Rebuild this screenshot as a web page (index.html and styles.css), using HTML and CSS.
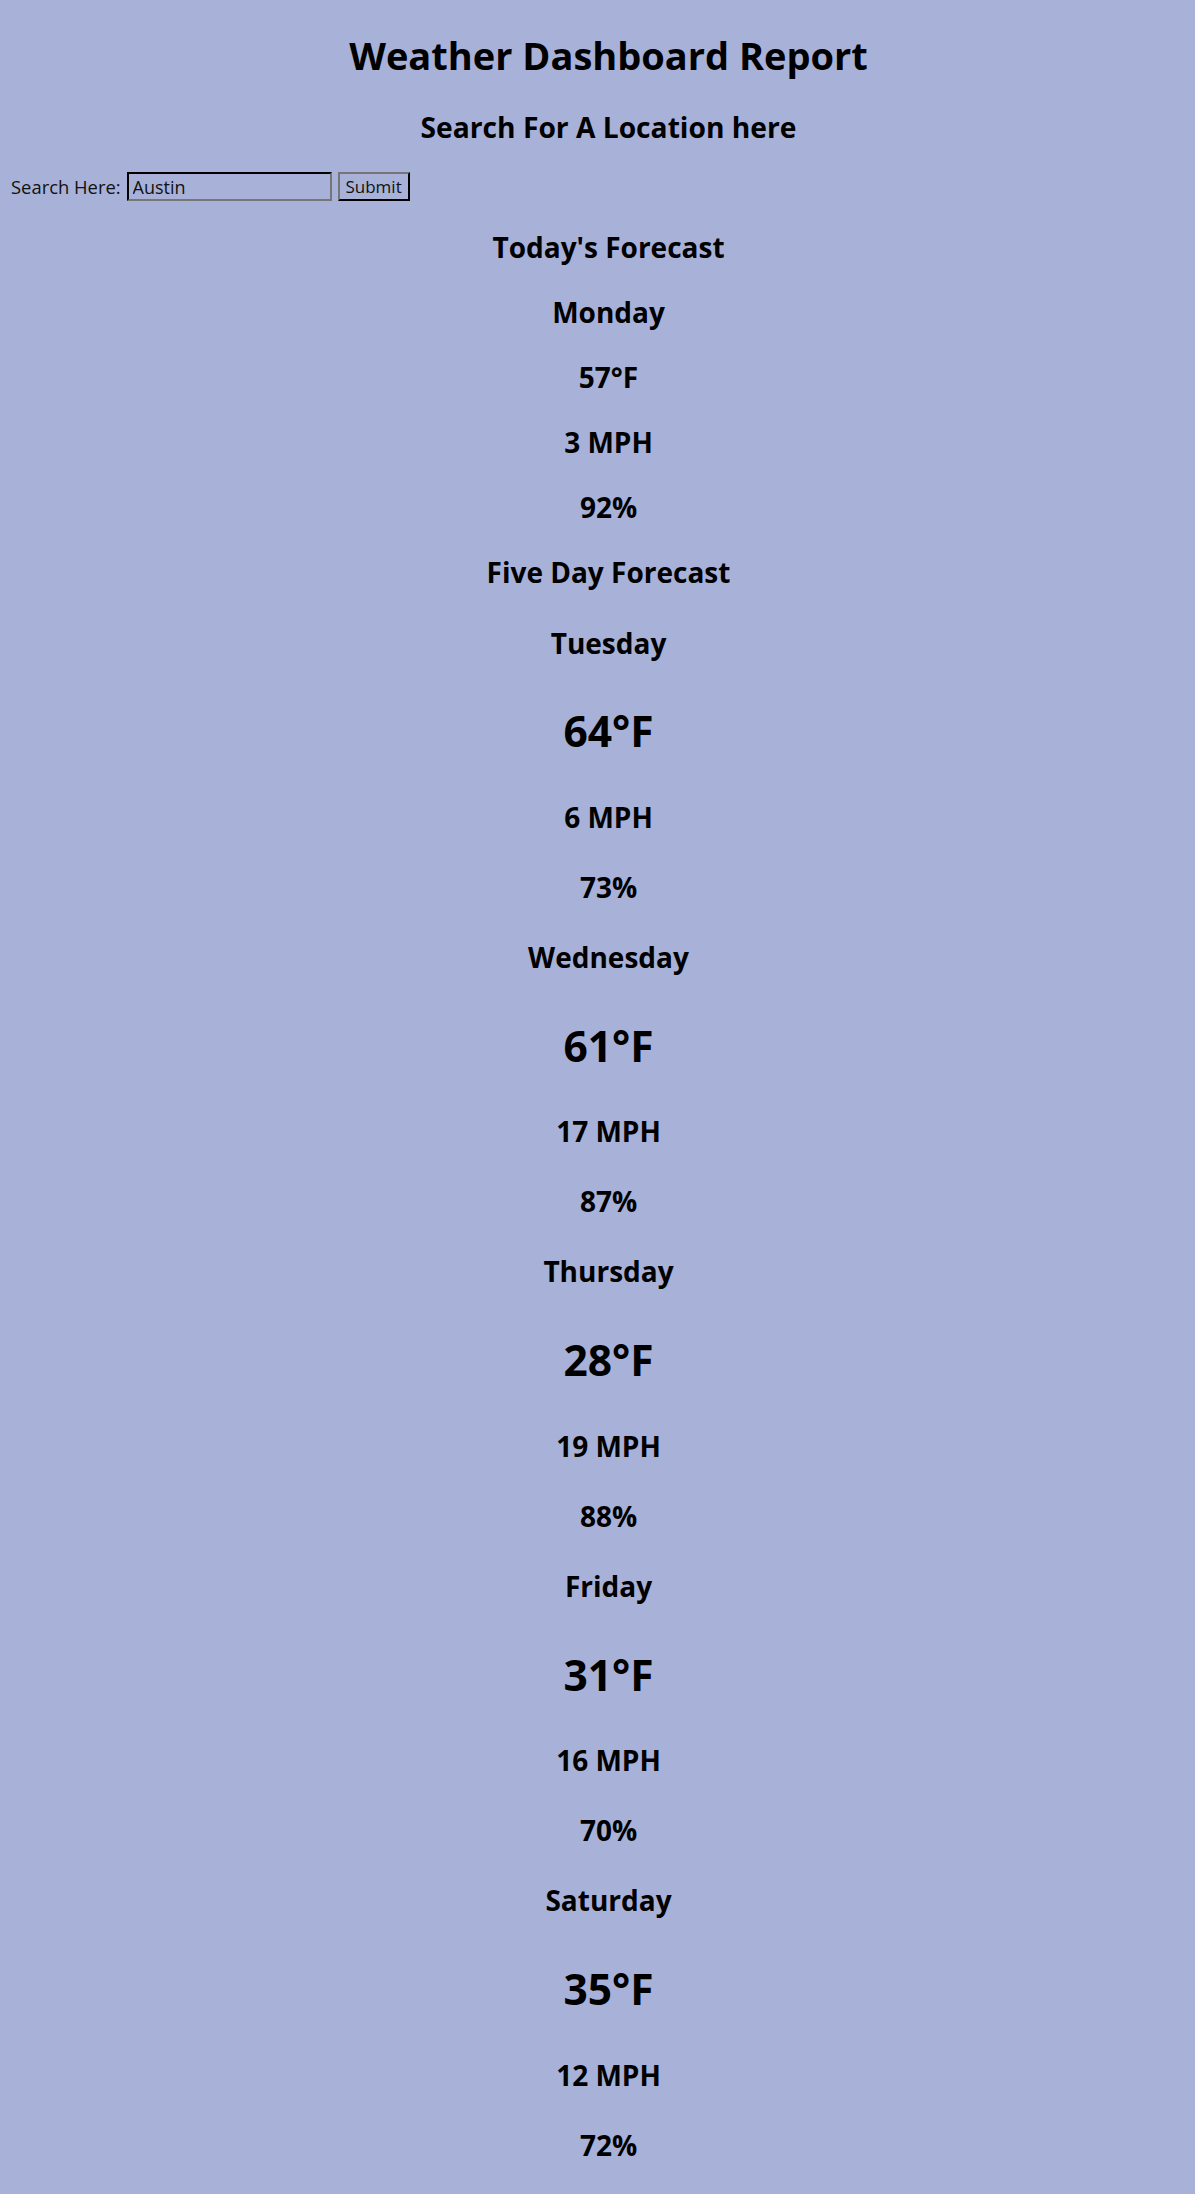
FILE: index.html
```html
<!DOCTYPE html>
<html lang="en">
<head>
<meta charset="utf-8">
<title>Weather Dashboard Report</title>
<link rel="stylesheet" href="styles.css">
</head>
<body>
<header class="top">
  <h1 class="title">Weather Dashboard Report</h1>
  <h2 class="subtitle">Search For A Location here</h2>
</header>
<form class="search-row">
  <label class="search-label" for="city">Search Here:</label>
  <input class="search-input" id="city" type="text" value="Austin">
  <button class="search-btn" type="button">Submit</button>
</form>
<main class="forecast">
  <section class="today">
    <h3 class="line">Today's Forecast</h3>
    <h3 class="line">Monday</h3>
    <h3 class="line">57°F</h3>
    <h3 class="line">3 MPH</h3>
    <h3 class="line">92%</h3>
    <h3 class="line five-head">Five Day Forecast</h3>
  </section>
  <section class="day">
    <h3 class="row">Tuesday</h3>
    <h2 class="temp">64°F</h2>
    <h3 class="row">6 MPH</h3>
    <h3 class="row">73%</h3>
  </section>
  <section class="day">
    <h3 class="row">Wednesday</h3>
    <h2 class="temp">61°F</h2>
    <h3 class="row">17 MPH</h3>
    <h3 class="row">87%</h3>
  </section>
  <section class="day">
    <h3 class="row">Thursday</h3>
    <h2 class="temp">28°F</h2>
    <h3 class="row">19 MPH</h3>
    <h3 class="row">88%</h3>
  </section>
  <section class="day">
    <h3 class="row">Friday</h3>
    <h2 class="temp">31°F</h2>
    <h3 class="row">16 MPH</h3>
    <h3 class="row">70%</h3>
  </section>
  <section class="day">
    <h3 class="row">Saturday</h3>
    <h2 class="temp">35°F</h2>
    <h3 class="row">12 MPH</h3>
    <h3 class="row">72%</h3>
  </section>
</main>
</body>
</html>
```
FILE: styles.css
```css
html {
  background: #a8b1d8;
}
body {
  margin: 0;
  background: #a8b1d8;
  color: #000;
  font-family: "Open Sans", "Noto Sans", sans-serif;
}
.top,
.forecast {
  padding-left: 22px;
  text-align: center;
}
.title {
  margin: 25px 0 0;
  font-size: 38px;
  line-height: 60px;
  font-weight: 700;
}
.subtitle {
  margin: 17px 0 0;
  font-size: 28.2px;
  line-height: 50px;
  font-weight: 700;
}
.search-row {
  display: flex;
  align-items: center;
  gap: 6px;
  margin: 20px 0 0;
  padding-left: 11px;
  height: 29px;
}
.search-label {
  font-size: 18.4px;
  line-height: 29px;
  color: #111;
}
.search-input {
  box-sizing: border-box;
  width: 205px;
  height: 29px;
  margin: 0;
  padding: 0 4px;
  border: 2px inset #767676;
  border-top-color: #2b2b2b;
  border-left-color: #2b2b2b;
  border-right-color: #767676;
  border-bottom-color: #767676;
  background: transparent;
  font-family: "Open Sans", "Noto Sans", sans-serif;
  font-size: 18px;
  color: #111;
}
.search-btn {
  box-sizing: border-box;
  width: 72px;
  height: 29px;
  margin: 0;
  padding: 0;
  border: 2px outset #767676;
  border-top-color: #767676;
  border-left-color: #767676;
  border-right-color: #2b2b2b;
  border-bottom-color: #2b2b2b;
  background: transparent;
  font-family: "Open Sans", "Noto Sans", sans-serif;
  font-size: 17px;
  color: #111;
}
.forecast {
  margin-top: 14px;
}
.line {
  margin: 0;
  font-size: 28px;
  line-height: 65px;
  font-weight: 700;
}
.five-head {
  margin-bottom: 2.5px;
}
.row {
  margin: 0;
  font-size: 28px;
  line-height: 70px;
  font-weight: 700;
}
.temp {
  margin: 23.6px 0 20.9px;
  font-size: 42.5px;
  line-height: 60px;
  font-weight: 700;
}
```
